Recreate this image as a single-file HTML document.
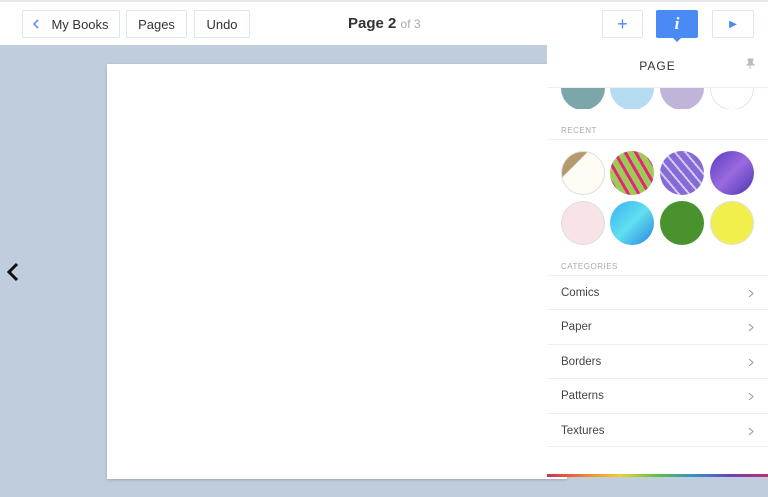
<!DOCTYPE html>
<html><head><style>
*{margin:0;padding:0;box-sizing:border-box}
body{width:768px;height:497px;overflow:hidden;background:#c0cddd;font-family:"Liberation Sans",sans-serif;position:relative}
.top{position:absolute;left:0;top:0;width:768px;height:45px;background:#fff;border-top:2px solid #e8e8e8}
.btn{position:absolute;top:8px;height:28px;border:1px solid #dbe5f5;border-radius:2px;font-size:13px;color:#333;display:flex;align-items:center;justify-content:center}
.page{position:absolute;left:107px;top:64px;width:460px;height:415px;background:#fff;box-shadow:0 1px 3px rgba(0,0,0,.2)}
.panel{position:absolute;left:547px;top:45px;width:221px;height:432px;background:#fff}
.c{position:absolute;width:44px;height:44px;border-radius:50%}
.lab{position:absolute;left:14px;font-size:8px;color:#aaa;letter-spacing:.5px}
.row{position:absolute;left:0;width:221px;height:34px;border-top:1px solid #eee;font-size:11.5px;color:#444;padding-left:14px;line-height:34px}
.row svg{position:absolute;right:14px;top:13px}
</style></head><body>
<div class="top">
<div class="btn" style="left:22px;width:98px"><svg width="6" height="10" style="margin-right:12px"><path d="M5 1L1 5l4 4" stroke="#4a8af4" stroke-width="1.5" fill="none"/></svg>My Books</div>
<div class="btn" style="left:126px;width:61px">Pages</div>
<div class="btn" style="left:194px;width:56px">Undo</div>
<div style="position:absolute;left:348px;top:13px;font-size:15px;font-weight:bold;color:#333">Page 2 <span style="font-size:12px;font-weight:normal;color:#aaa">of 3</span></div>
<div class="btn" style="left:602px;width:41px;color:#4a8af4;font-size:18px">+</div>
<div class="btn" style="left:656px;width:42px;background:#4a8af4;border-color:#4a8af4;color:#fff;font-family:'Liberation Serif',serif;font-style:italic;font-weight:bold;font-size:17px">i</div>
<div style="position:absolute;left:672px;top:35px;border:5px solid transparent;border-top-color:#4a8af4"></div>
<div class="btn" style="left:712px;width:42px;color:#4a8af4;font-size:10px">&#9654;</div>
</div>
<div class="page"></div>
<svg style="position:absolute;left:5px;top:262px" width="14" height="20"><path d="M12 2L4 10l8 8" stroke="#111" stroke-width="3" fill="none"/></svg>
<div class="panel">
<div style="position:absolute;left:0;top:14px;width:221px;text-align:center;font-size:12px;letter-spacing:1px;color:#333">PAGE</div>
<svg style="position:absolute;right:13px;top:13px" width="10" height="12"><path d="M3 1h5l-1 4 2 2H2l2-2zM5 7v4" stroke="#bbb" fill="#bbb"/></svg>
<div style="position:absolute;top:42px;left:0;width:221px;height:22px;overflow:hidden;border-top:1px solid #eee">
<div class="c" style="left:14px;top:-22px;background:#7ba6aa"></div>
<div class="c" style="left:63px;top:-22px;background:#b6dcf2"></div>
<div class="c" style="left:113px;top:-22px;background:#c0b5d8"></div>
<div class="c" style="left:163px;top:-22px;border:1px solid #dbe5f5"></div>
</div>
<div style="position:absolute;top:94px;left:0;width:221px;border-top:1px solid #eee"></div>
<div class="lab" style="top:81px">RECENT</div>
<div class="c" style="left:14px;top:106px;background:linear-gradient(135deg,#b59a6e 30%,#fffdf3 31%);border:1px solid #ddd"></div>
<div class="c" style="left:63px;top:106px;background:repeating-linear-gradient(60deg,#9ccb58 0 6px,#e8247a 6px 9px)"></div>
<div class="c" style="left:113px;top:106px;background:repeating-linear-gradient(50deg,#8a68d6 0 6px,#c4d0f8 6px 8px)"></div>
<div class="c" style="left:163px;top:106px;background:linear-gradient(135deg,#5a3cc0,#9a6ae0,#4a34b0)"></div>
<div class="c" style="left:14px;top:156px;background:#f8e4e6;border:1px solid #ddd"></div>
<div class="c" style="left:63px;top:156px;background:linear-gradient(135deg,#3ab0f0,#60e0f0,#2a80e0)"></div>
<div class="c" style="left:113px;top:156px;background:#4a922e"></div>
<div class="c" style="left:163px;top:156px;background:#f0ef4c;border:1px solid #ddd"></div>
<div class="lab" style="top:217px">CATEGORIES</div>
<div class="row" style="top:230px">Comics<svg width="6" height="9"><path d="M1 1l4 3.5L1 8" stroke="#999" fill="none"/></svg></div>
<div class="row" style="top:264px">Paper<svg width="6" height="9"><path d="M1 1l4 3.5L1 8" stroke="#999" fill="none"/></svg></div>
<div class="row" style="top:299px">Borders<svg width="6" height="9"><path d="M1 1l4 3.5L1 8" stroke="#999" fill="none"/></svg></div>
<div class="row" style="top:333px">Patterns<svg width="6" height="9"><path d="M1 1l4 3.5L1 8" stroke="#999" fill="none"/></svg></div>
<div class="row" style="top:368px;border-bottom:1px solid #eee">Textures<svg width="6" height="9"><path d="M1 1l4 3.5L1 8" stroke="#999" fill="none"/></svg></div>
<div style="position:absolute;left:0;top:429px;width:221px;height:3px;background:linear-gradient(90deg,#d03050,#f08030,#f0d030,#60c040,#3090d0,#7040b0,#c03070)"></div>
</div>
</body></html>
